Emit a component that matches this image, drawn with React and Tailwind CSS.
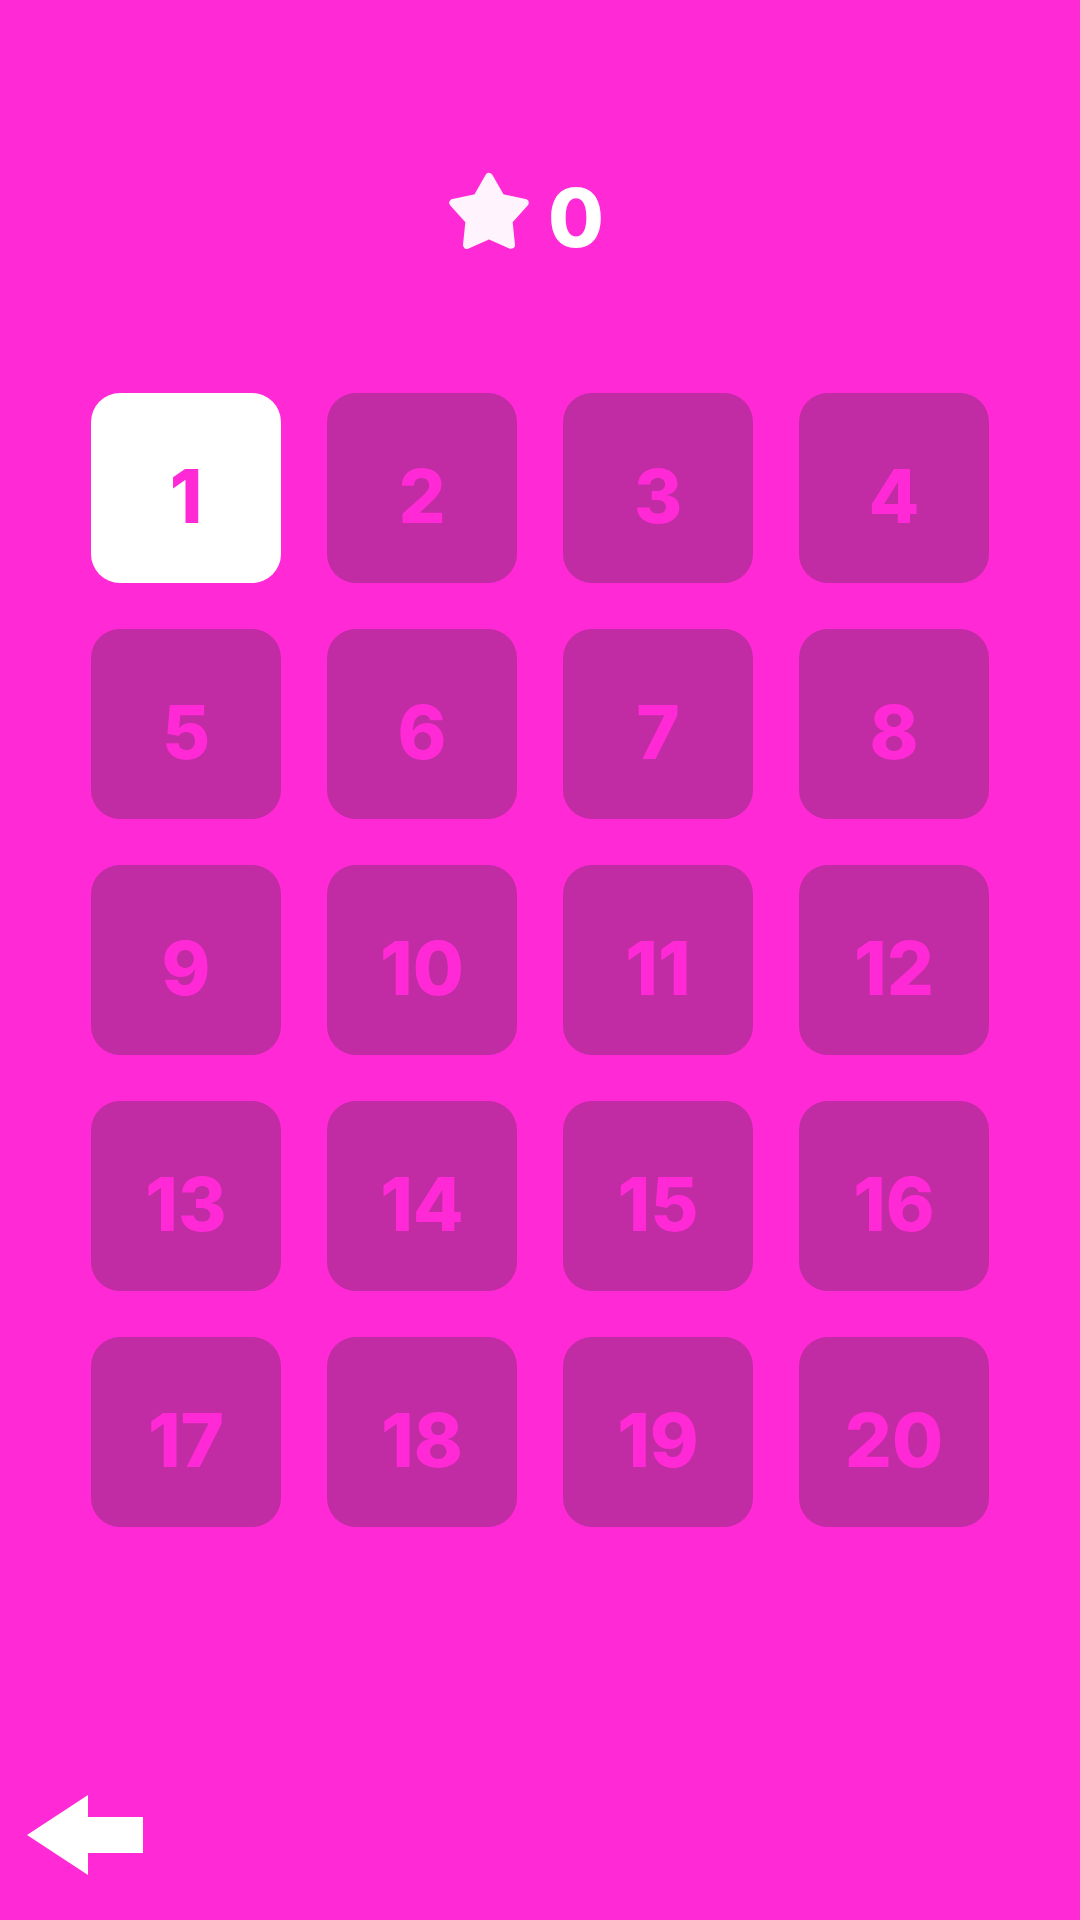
import React from 'react';

const levels = Array.from({ length: 20 }, (_, i) => i + 1);

const LevelTile = ({ n, active }) => {
  return (
    <div
      className={
        active
          ? 'w-[190px] h-[190px] rounded-[29px] bg-white flex items-center justify-center pt-[16px]'
          : 'w-[190px] h-[190px] rounded-[29px] bg-[#c12ba3] flex items-center justify-center pt-[16px]'
      }
    >
      <span className="text-[#ff2ad6] text-[length:74px] font-extrabold leading-none">{n}</span>
    </div>
  );
};

const App = () => {
  return (
    <div
      className="min-h-[1920px] w-[1080px] bg-[#ff2ad6] flex flex-col"
      style={{ fontFamily: 'Inter, "Noto Sans", sans-serif' }}
    >
      {/* Score */}
      <div className="h-[393px] pt-[170px] pr-[28px] flex items-start justify-center gap-[18px]">
        <svg width="82" height="90" viewBox="0 0 82 90">
          <polygon
            points="41,7 53,27.9 76.7,32.9 60.5,50.8 63,74.8 41,65 19,74.8 21.5,50.8 5.3,32.9 29,27.9"
            fill="#fff3fd"
            stroke="#fff3fd"
            strokeWidth="8"
            strokeLinejoin="round"
          />
        </svg>
        <span className="mt-[8px] text-white text-[length:81px] font-extrabold leading-none">0</span>
      </div>

      {/* Level grid */}
      <div className="mx-auto grid grid-cols-4 gap-[46px]">
        {levels.map((n) => (
          <LevelTile key={n} n={n} active={n === 1} />
        ))}
      </div>

      <div className="flex-1" />

      {/* Back button */}
      <div className="pl-[27px] pb-[45px]">
        <svg width="117" height="80" viewBox="0 0 117 80">
          <polygon points="0,40 61,0 61,22 116,22 116,58 61,58 61,80" fill="#ffffff" />
        </svg>
      </div>
    </div>
  );
};

export default App;
